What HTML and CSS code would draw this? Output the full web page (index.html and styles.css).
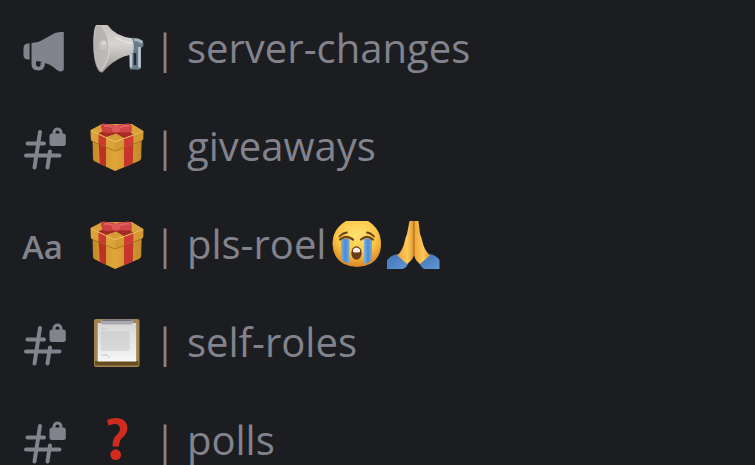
FILE: index.html
```html
<!DOCTYPE html>
<html lang="en">
<head>
  <meta charset="UTF-8">
  <meta name="viewport" content="width=device-width, initial-scale=1.0">
  <title>Channels</title>
  <link rel="stylesheet" href="styles.css">
</head>
<body>
  <!-- shared drawings -->
  <svg class="defs" width="0" height="0" aria-hidden="true">
    <defs>
      <linearGradient id="goldLeft" x1="0" y1="0" x2="1" y2="0">
        <stop offset="0" stop-color="#c48a26"/><stop offset="1" stop-color="#e0a63a"/>
      </linearGradient>
      <linearGradient id="goldRight" x1="0" y1="0" x2="1" y2="0">
        <stop offset="0" stop-color="#dfa537"/><stop offset="1" stop-color="#c48a28"/>
      </linearGradient>
      <linearGradient id="bell" x1="0" y1="0" x2="0" y2="1">
        <stop offset="0" stop-color="#c4c1be"/><stop offset=".4" stop-color="#d6d3d0"/><stop offset="1" stop-color="#98938f"/>
      </linearGradient>
      <linearGradient id="rim" x1="0" y1="0" x2="1" y2="1">
        <stop offset="0" stop-color="#b3b0ad"/><stop offset="1" stop-color="#bfbcb9"/>
      </linearGradient>
      <linearGradient id="paper" x1="0" y1="0" x2="0" y2="1">
        <stop offset="0" stop-color="#d6d6d6"/><stop offset="1" stop-color="#f6f6f6"/>
      </linearGradient>
      <radialGradient id="face" cx=".5" cy=".3" r=".7">
        <stop offset="0" stop-color="#ffe272"/><stop offset=".6" stop-color="#fcc544"/><stop offset="1" stop-color="#d98423"/>
      </radialGradient>
      <linearGradient id="tear" x1="0" y1="0" x2="1" y2="0">
        <stop offset="0" stop-color="#7db3e6"/><stop offset=".5" stop-color="#4c8bcd"/><stop offset="1" stop-color="#74abe0"/>
      </linearGradient>
      <linearGradient id="skin" x1="0" y1="0" x2="1" y2="0">
        <stop offset="0" stop-color="#eea437"/><stop offset=".6" stop-color="#fcca58"/><stop offset="1" stop-color="#dc9330"/>
      </linearGradient>
      <linearGradient id="sleeve" x1="0" y1="0" x2="1" y2="1">
        <stop offset="0" stop-color="#3e72b5"/><stop offset="1" stop-color="#6297d6"/>
      </linearGradient>

      <symbol id="hashLock" viewBox="0 0 44 44">
        <path d="M18 6L12.500 41.500M28 25.500L25.500 41.500M5.500 17.500H22M4 29.500H37.500" fill="none" stroke="currentColor" stroke-width="4" stroke-linecap="round"/>
        <path d="M32 10V6.500a3.500 3.500 0 0 1 7 0V10" fill="none" stroke="currentColor" stroke-width="3"/>
        <rect x="27.500" y="7.500" width="16.300" height="12.500" rx="2.500" fill="currentColor"/>
      </symbol>

      <symbol id="gift" viewBox="0 0 54 50">
        <path d="M2.500 14L25 24V48L5 38.500Q3 37.500 3 36Z" fill="url(#goldLeft)"/>
        <path d="M51.700 14L25 24V48L49 38Q51 37 51.200 35Z" fill="url(#goldRight)"/>
        <path d="M8.500 17L16 20V43.800L9.800 40.800Z" fill="#bd3029"/>
        <path d="M34 20L43.300 16.500L42.800 40.600L34 44.300Z" fill="#c5352c"/>
        <path d="M.5 7L25 18.500V27.500L2 18Q.8 17.500.8 16Z" fill="#dca23a"/>
        <path d="M53.500 8L25 18.500V27.500L52 17.500Q53.300 17 53.300 15.500Z" fill="#d39a33"/>
        <path d="M.5 7L12 1H42L53.500 8L25 18.500Z" fill="#d9a13a"/>
        <path d="M8.500 10.600L16 14.200V23.800L8.500 20.700Z" fill="#cb3a31"/>
        <path d="M34 15.200L43.300 11.700V20.700L34 24.200Z" fill="#cf3b33"/>
        <path d="M8.500 10.600L17 6H37L43.300 11.700L34 15.200L26 11L16 14.200Z" fill="#a62b24"/>
        <path d="M16 14.200L26 10.500L34 15.200L25 18.500Z" fill="#d59d38"/>
        <path d="M1 7.500L25 18.800L53 8.500" fill="none" stroke="#f0c565" stroke-width="1"/>
        <path d="M2.500 18.500L25 28L51.500 18" fill="none" stroke="#9b5f16" stroke-width="1" opacity=".65"/>
        <path d="M25 2L13 .5Q10.500 1 11 4.500L12.500 8.500Q15 11 24 9Z" fill="#cc4144"/>
        <path d="M27 2L38 .5Q41 .5 41.500 3L42 8Q40 10.500 28 9Z" fill="#d04548"/>
        <path d="M14 3Q19 2 24 5M39 3Q34 2 29 5" fill="none" stroke="#e06a68" stroke-width="1.500"/>
        <rect x="22" y="2.500" width="8" height="7" rx="2" fill="#dc5958"/>
      </symbol>
    </defs>
  </svg>

  <nav class="channels" aria-label="Channels">
    <a class="channel" href="#server-changes">
      <svg class="type" viewBox="0 0 44 44" aria-hidden="true">
        <path d="M7.600 15.500V31.500H5.500Q1.500 31 1.500 27V20.500Q1.500 16 5.500 15.500Z" fill="currentColor"/>
        <path fill-rule="evenodd" d="M9.500 15Q17 14.500 23 10.500L33 5Q38 3.500 41.800 4V41.500Q41 43.800 38 43.500Q35 43 32 39.500Q28 36 23 35Q23 42.500 16.200 42.500Q9.500 42.500 9.500 36ZM14 33.500V36Q14.300 38.800 16.500 38.800Q19 38.500 18.500 35L20 34Q16.500 33 14 33.500Z" fill="currentColor"/>
      </svg>
      <svg class="emoji" viewBox="0 0 54 50" role="img" aria-label="megaphone">
        <path d="M41 13Q47 12 53 15.500L53.500 21L51 23V43Q50 45.500 46 44.500L40 44.500L39 29Z" fill="#6b7c89"/>
        <path d="M41 29V42.500M49.500 22V42.500" stroke="#b9cbd6" stroke-width="2.500"/>
        <path d="M45 28V40" stroke="#22272d" stroke-width="2.500"/>
        <path d="M44 15Q49 14 52 18" fill="none" stroke="#a9bac4" stroke-width="2.500"/>
        <path d="M6 0H17.500Q25 11 42 13.300Q45 20 43 28Q39 31 34 31.500Q22 36 12.500 47.500Q10 48 8 45Q3 36 3.300 17Q3.500 4 6 0Z" fill="url(#bell)"/>
        <path d="M6 1H12Q18 8 19 20Q20 36 11 46Q7 43 5 33Q2.500 14 6 1Z" fill="url(#rim)"/>
        <path d="M12 1Q18 8 19 20Q20 36 11 46" fill="none" stroke="#dad7d4" stroke-width="1"/>
        <ellipse cx="13" cy="20" rx="4" ry="5" fill="#c7c5c3"/>
        <circle cx="14" cy="18" r="2" fill="#dedbd8"/>
        <path d="M25 12Q33 17 42 18" fill="none" stroke="#ebe8e5" stroke-width="2" opacity=".6"/>
      </svg>
      <span class="bar">|</span>
      <span class="name">server-changes</span>
    </a>

    <a class="channel" href="#giveaways">
      <svg class="type" aria-hidden="true"><use href="#hashLock"/></svg>
      <svg class="emoji" role="img" aria-label="gift"><use href="#gift"/></svg>
      <span class="bar">|</span>
      <span class="name">giveaways</span>
    </a>

    <a class="channel" href="#pls-roel">
      <span class="type type-text">Aa</span>
      <svg class="emoji" role="img" aria-label="gift"><use href="#gift"/></svg>
      <span class="bar">|</span>
      <span class="name">pls-roel</span>
      <span class="tail">
        <svg class="emoji" viewBox="0 0 54 50" role="img" aria-label="crying face">
          <path d="M14 0H36Q49 8 49 23Q49 37 38 43Q25 49 12 43Q1 37 .5 23Q.5 8 14 0Z" fill="url(#face)"/>
          <path d="M9 18H17.500V42.500Q12.500 41.500 9 38.500Z" fill="url(#tear)"/>
          <path d="M32 18H40V39Q37 41.500 32 43Z" fill="url(#tear)"/>
          <path d="M8 18.500Q14 13.500 21 18.500M29 18.500Q35 13.500 41 18.500" fill="none" stroke="#704514" stroke-width="2.200" stroke-linecap="round"/>
          <path d="M7.500 15.500Q10.500 12 15 11.500M35 11.500Q39 12 42 15.500" fill="none" stroke="#704514" stroke-width="1.800" stroke-linecap="round"/>
          <ellipse cx="24.500" cy="32" rx="5.200" ry="6.700" fill="#6b3a18"/>
          <path d="M21 28.500Q24.500 24.500 28 28.500V31Q24.500 32 21 31Z" fill="#f4eee5"/>
        </svg>
        <svg class="emoji" viewBox="0 0 54 50" role="img" aria-label="folded hands">
          <path d="M1 39Q5 34 12 33L22.500 42Q21 46 17 48H1Z" fill="url(#sleeve)"/>
          <path d="M53.500 39Q50 34 43.500 33L33 42Q35 46 38 48H53.500Z" fill="url(#sleeve)"/>
          <path d="M23.500 0H28V34Q26 40 21 43L11.500 34.500Q17 29 19 19Q20 15 21 13Z" fill="url(#skin)"/>
          <path d="M32.500 0H28V34Q29.500 40 34 43L44 34.500Q38 29 36 19Q35 15 34 13Z" fill="url(#skin)"/>
          <path d="M28 0V34" stroke="#a9641a" stroke-width="1"/>
        </svg>
      </span>
    </a>

    <a class="channel" href="#self-roles">
      <svg class="type" aria-hidden="true"><use href="#hashLock"/></svg>
      <svg class="emoji" viewBox="0 0 54 50" role="img" aria-label="clipboard">
        <rect x="4" y="0" width="45.500" height="48" rx="2" fill="#a38450"/>
        <rect x="5" y="42" width="43.500" height="4.500" fill="#674c1f"/>
        <rect x="7.700" y="4" width="38.500" height="38.500" fill="url(#paper)"/>
        <rect x="10.700" y="12" width="29" height="20" rx="2" fill="#c6c6c6" opacity=".5"/>
        <path d="M11 10H18M11 36H17L20 39" fill="none" stroke="#c6c6c6" stroke-width="1"/>
        <path d="M11 .5H43V3Q43 5.500 40.500 5.500H13.500Q11 5.500 11 3Z" fill="#aaa7ad"/>
        <path d="M12 1.200H42" stroke="#77747b" stroke-width="1.500"/>
      </svg>
      <span class="bar">|</span>
      <span class="name">self-roles</span>
    </a>

    <a class="channel" href="#polls">
      <svg class="type" aria-hidden="true"><use href="#hashLock"/></svg>
      <svg class="emoji" viewBox="0 0 54 50" role="img" aria-label="question mark">
        <path d="M17 3Q23 .5 28 1.200Q37.500 2.500 37.500 11Q37 17 32.500 20.500Q29 23.500 29 29.500H22.500Q22.500 22 26 18.500Q30 15 30 11.500Q29.500 7 25 7Q22 7 18.500 8.500Z" fill="#cf2c20"/>
        <circle cx="25.700" cy="37.700" r="5.400" fill="#cf2c20"/>
      </svg>
      <span class="bar">|</span>
      <span class="name">polls</span>
    </a>
  </nav>
</body>
</html>
```
FILE: styles.css
```css
body {
  margin: 0;
  height: 100vh;
  overflow: hidden;
  background: #1c1d21; /* sidebar background */
  color: #82838d; /* muted channel text */
  font-family: 'Open Sans', 'Noto Sans', Arial, sans-serif;
  font-size: 40px;
}
.defs {
  position: absolute;
}
.channels {
  display: flex;
  flex-direction: column;
  padding: 1px 22px 0 22px;
}
.channel {
  display: flex;
  align-items: center;
  flex-shrink: 0;
  height: 98px;
  color: inherit;
  text-decoration: none;
  white-space: nowrap;
}
.type {
  flex: none;
  width: 44px;
  height: 44px;
  margin-right: 24px;
}
.type-text {
  font-size: 33px;
  font-weight: 600;
  line-height: 46px;
}
.emoji {
  flex: none;
  display: block;
  width: 54px;
  height: 50px;
}
/* text sits slightly above the icon centre line */
.bar,
.name {
  line-height: 48px;
  padding-bottom: 4px;
}
.bar {
  margin: 0 11px 0 10px;
}
.tail {
  display: flex;
  margin-left: 6px;
}
```
